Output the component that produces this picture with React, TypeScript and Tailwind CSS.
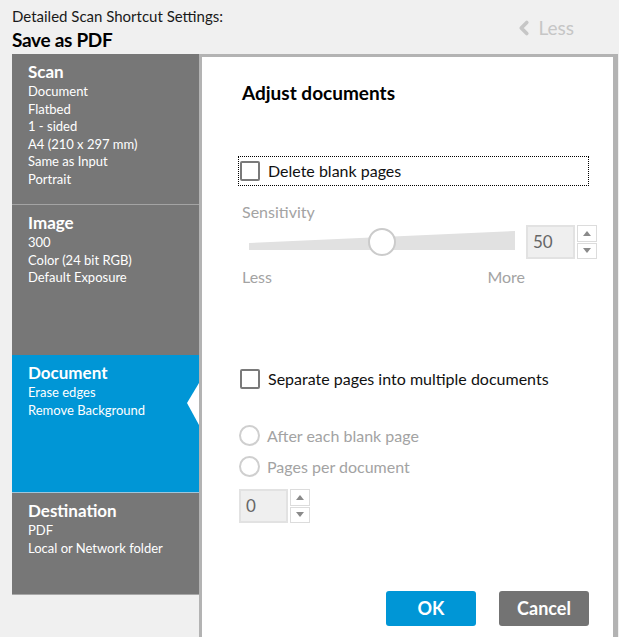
import { ChevronLeft } from "lucide-react";

type SectionProps = {
  title: string;
  items: string[];
  height: string;
  active?: boolean;
  divider: string;
};

function SidebarSection({ title, items, height, active, divider }: SectionProps) {
  return (
    <div
      className={`relative ${height} ${divider} ${
        active ? "bg-[#0096d6]" : "bg-[#777777]"
      } pl-4 pt-[7px] text-white`}
    >
      <h3 className="text-[17px] leading-[22px] font-bold">{title}</h3>
      {items.map((item) => (
        <p key={item} className="text-[13px] leading-[17.5px]">
          {item}
        </p>
      ))}
      {active && (
        <svg className="absolute right-0 top-[28px] h-[42px] w-[12px]" viewBox="0 0 12 42">
          <polygon points="12,0 0,20 12,42" fill="#ffffff" />
        </svg>
      )}
    </div>
  );
}

function Checkbox({ label, focused }: { label: string; focused?: boolean }) {
  return (
    <div
      className={`flex items-center gap-[8px] h-[28px] w-[349px] pl-[1px] ${
        focused ? "outline outline-1 outline-dotted outline-black" : ""
      }`}
    >
      <span className="w-[20px] h-[20px] rounded-[2px] border-2 border-[#7a7a7a] bg-white" />
      <span className="text-[16px] text-[#111]">{label}</span>
    </div>
  );
}

function Radio({ label }: { label: string }) {
  return (
    <div className="flex items-center gap-[7px] h-[21px]">
      <span className="w-[21px] h-[21px] rounded-full border-2 border-[#cfcfcf] bg-white" />
      <span className="text-[16px] text-[#a3a3a3]">{label}</span>
    </div>
  );
}

function Spinner({ value, width }: { value: string; width: string }) {
  return (
    <div className="flex gap-[2px] h-[34px]">
      <div
        className={`${width} h-full bg-[#efefef] border-2 border-[#e2e2e2] pl-[5px] flex items-center text-[17px] text-[#666]`}
      >
        {value}
      </div>
      <div className="flex flex-col gap-[1px] w-[20px]">
        <div className="flex-1 border border-[#dcdcdc] flex items-center justify-center">
          <svg width="8" height="5" viewBox="0 0 8 5">
            <polygon points="0,5 4,0 8,5" fill="#8a8a8a" />
          </svg>
        </div>
        <div className="flex-1 border border-[#dcdcdc] flex items-center justify-center">
          <svg width="8" height="5" viewBox="0 0 8 5">
            <polygon points="0,0 8,0 4,5" fill="#8a8a8a" />
          </svg>
        </div>
      </div>
    </div>
  );
}

export default function App() {
  return (
    <div className="w-[619px] h-[637px] bg-[#f0f0f0] overflow-hidden flex flex-col font-[Lato,sans-serif]">
      <header className="h-[54px] shrink-0 flex justify-between pl-3 pr-[45px]">
        <div className="pt-[6px]">
          <p className="text-[15px] leading-[20px] text-[#1a1a1a]">Detailed Scan Shortcut Settings:</p>
          <p className="mt-[2px] text-[19px] leading-[24px] font-bold text-black tracking-[-0.3px]">Save as PDF</p>
        </div>
        <div className="flex items-center gap-[5px] pt-[16px] self-start text-[19px] leading-[24px] text-[#c6c6c6]">
          <ChevronLeft className="w-[22px] h-[24px] -mr-[2px]" strokeWidth={4} />
          <span>Less</span>
        </div>
      </header>

      <div className="flex flex-1 pl-3 pr-[1px]">
        <aside className="w-[187px] shrink-0 flex flex-col">
          <SidebarSection
            title="Scan"
            items={["Document", "Flatbed", "1 - sided", "A4 (210 x 297 mm)", "Same as Input", "Portrait"]}
            height="h-[151px]"
            divider="border-b border-[#a4a4a4]"
          />
          <SidebarSection
            title="Image"
            items={["300", "Color (24 bit RGB)", "Default Exposure"]}
            height="h-[150px]"
            divider=""
          />
          <SidebarSection
            title="Document"
            items={["Erase edges", "Remove Background"]}
            height="h-[138px]"
            divider="border-b border-[#9fc6dc]"
            active
          />
          <SidebarSection
            title="Destination"
            items={["PDF", "Local or Network folder"]}
            height="h-[102px]"
            divider="border-b border-[#a8a8a8]"
          />
        </aside>

        <main className="min-w-0 flex-1 bg-white border-l-[3px] border-t-[3px] border-r-[5px] border-[#b3b3b3] pl-[37px] pr-[16px] flex flex-col">
          <h2 className="ml-[3px] mt-[24px] text-[19px] leading-[24px] font-bold text-black">Adjust documents</h2>

          <div className="mt-[52px]">
            <Checkbox label="Delete blank pages" focused />
          </div>

          <p className="ml-[3px] mt-[17px] text-[16px] leading-[20px] text-[#a3a3a3]">Sensitivity</p>

          <div className="mt-[3px] flex items-center">
            <div className="relative w-[266px] ml-[10px] h-[34px]">
              <svg className="absolute left-0 top-0" width="266" height="34" viewBox="0 0 266 34">
                <polygon points="0,18 266,6 266,25 0,25" fill="#e1e1e1" />
                <circle cx="133" cy="17" r="13" fill="#ffffff" stroke="#cbcbcb" strokeWidth="2" />
              </svg>
            </div>
            <div className="ml-[11px]">
              <Spinner value="50" width="w-[49px]" />
            </div>
          </div>

          <div className="mt-[8px] ml-[3px] w-[283px] flex justify-between text-[16px] leading-[20px] text-[#a3a3a3]">
            <span>Less</span>
            <span>More</span>
          </div>

          <div className="mt-[78px]">
            <Checkbox label="Separate pages into multiple documents" />
          </div>

          <div className="mt-[32px] flex flex-col gap-[10px]">
            <Radio label="After each blank page" />
            <Radio label="Pages per document" />
          </div>

          <div className="mt-[12px]">
            <Spinner value="0" width="w-[49px]" />
          </div>

          <div className="mt-auto mb-[11px] flex justify-end gap-[23px] mr-[8px]">
            <button className="w-[90px] h-[35px] rounded-[3px] bg-[#0096d6] text-white text-[18px] font-bold">
              OK
            </button>
            <button className="w-[90px] h-[35px] rounded-[3px] bg-[#737373] text-white text-[18px] font-bold">
              Cancel
            </button>
          </div>
        </main>
      </div>
    </div>
  );
}
